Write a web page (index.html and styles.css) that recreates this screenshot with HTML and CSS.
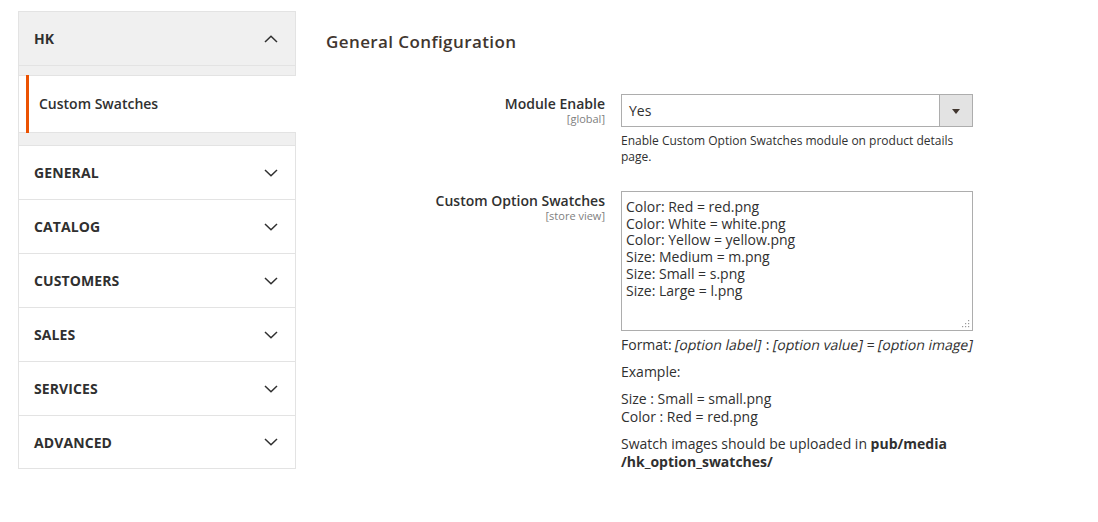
FILE: index.html
```html
<!DOCTYPE html>
<html>
<head>
<meta charset="utf-8">
<title>Configuration</title>
<link rel="stylesheet" href="styles.css">
</head>
<body>
<div class="page">
  <nav class="nav">
    <div class="nav-group">
      <div class="nav-title nav-title-open">
        <span>HK</span>
        <svg class="chev" width="14" height="8" viewBox="0 0 14 8"><polyline points="1,7 7,1.2 13,7" fill="none" stroke="#303030" stroke-width="1.5"/></svg>
      </div>
      <div class="nav-items">
        <div class="nav-item">
          <div class="nav-link">Custom Swatches</div>
        </div>
      </div>
    </div>
    <div class="nav-title"><span>GENERAL</span><svg class="chev" width="14" height="8" viewBox="0 0 14 8"><polyline points="1,1 7,6.8 13,1" fill="none" stroke="#303030" stroke-width="1.5"/></svg></div>
    <div class="nav-title"><span>CATALOG</span><svg class="chev" width="14" height="8" viewBox="0 0 14 8"><polyline points="1,1 7,6.8 13,1" fill="none" stroke="#303030" stroke-width="1.5"/></svg></div>
    <div class="nav-title"><span>CUSTOMERS</span><svg class="chev" width="14" height="8" viewBox="0 0 14 8"><polyline points="1,1 7,6.8 13,1" fill="none" stroke="#303030" stroke-width="1.5"/></svg></div>
    <div class="nav-title"><span>SALES</span><svg class="chev" width="14" height="8" viewBox="0 0 14 8"><polyline points="1,1 7,6.8 13,1" fill="none" stroke="#303030" stroke-width="1.5"/></svg></div>
    <div class="nav-title"><span>SERVICES</span><svg class="chev" width="14" height="8" viewBox="0 0 14 8"><polyline points="1,1 7,6.8 13,1" fill="none" stroke="#303030" stroke-width="1.5"/></svg></div>
    <div class="nav-title nav-last"><span>ADVANCED</span><svg class="chev" width="14" height="8" viewBox="0 0 14 8"><polyline points="1,1 7,6.8 13,1" fill="none" stroke="#303030" stroke-width="1.5"/></svg></div>
  </nav>

  <main class="main">
    <h2 class="section-title">General Configuration</h2>

    <div class="row row-first">
      <div class="label">
        <div class="label-text">Module Enable</div>
        <div class="scope">[global]</div>
      </div>
      <div class="field">
        <div class="select">
          <span class="select-value">Yes</span>
          <span class="select-arrow"><span class="tri"></span></span>
        </div>
        <div class="comment">Enable Custom Option Swatches module on product details page.</div>
      </div>
    </div>

    <div class="row">
      <div class="label">
        <div class="label-text">Custom Option Swatches</div>
        <div class="scope">[store view]</div>
      </div>
      <div class="field">
        <div class="textarea-wrap">
          <textarea class="textarea" spellcheck="false">Color: Red = red.png
Color: White = white.png
Color: Yellow = yellow.png
Size: Medium = m.png
Size: Small = s.png
Size: Large = l.png</textarea>
          <svg class="grip" width="8" height="8" viewBox="0 0 8 8">
            <rect x="6" y="0" width="1.2" height="1.2" fill="#999"/>
            <rect x="3" y="3" width="1.2" height="1.2" fill="#999"/>
            <rect x="6" y="3" width="1.2" height="1.2" fill="#999"/>
            <rect x="0" y="6" width="1.2" height="1.2" fill="#999"/>
            <rect x="3" y="6" width="1.2" height="1.2" fill="#999"/>
            <rect x="6" y="6" width="1.2" height="1.2" fill="#999"/>
          </svg>
        </div>
        <div class="note">
          <p class="nowrap">Format: <span class="obl">[option label]</span> : <span class="obl">[option value]</span> = <span class="obl">[option image]</span></p>
          <p>Example:</p>
          <p>Size : Small = small.png<br>Color : Red = red.png</p>
          <p>Swatch images should be uploaded in <strong>pub/media<wbr>/hk_option_swatches/</strong></p>
        </div>
      </div>
    </div>
  </main>
</div>
</body>
</html>
```

FILE: styles.css
```css
* { box-sizing: border-box; }

html, body {
  margin: 0;
  padding: 0;
  background: #ffffff;
}

body {
  font-family: "Open Sans", "Liberation Sans", sans-serif;
  color: #303030;
  font-size: 14px;
}

.page {
  display: flex;
  align-items: flex-start;
  gap: 30px;
  padding: 11px 0 0 18px;
}

/* Sidebar navigation */
.nav {
  width: 278px;
  flex: none;
  border: 1px solid #e3e3e3;
  background: #ffffff;
}

.nav-title {
  height: 54px;
  display: flex;
  align-items: center;
  justify-content: space-between;
  padding: 0 18px 0 15px;
  border-bottom: 1px solid #e3e3e3;
  font-weight: 700;
  font-size: 14px;
  color: #303030;
  letter-spacing: 0.1px;
}

.nav-title-open {
  background: #f0f0f0;
}

.nav-last {
  border-bottom: none;
  height: 52px;
}

.chev {
  display: block;
  margin-right: -1px;
}

.nav-items {
  background: #f0f0f0;
  padding: 9px 0 12px;
  border-bottom: 1px solid #e3e3e3;
}

.nav-item {
  background: #ffffff;
  border-top: 1px solid #e3e3e3;
  border-bottom: 1px solid #e3e3e3;
  margin-right: -1px;
  padding-left: 7px;
}

.nav-item .nav-link {
  border-left: 3px solid #eb5202;
  margin: -1px 0;
  height: 58px;
  display: flex;
  align-items: center;
  padding-left: 10px;
  padding-bottom: 2px;
  font-weight: 600;
  font-size: 14px;
  color: #303030;
}

/* Main */
.main {
  width: 660px;
}

.section-title {
  margin: 19px 0 0 0;
  font-size: 17px;
  line-height: 24px;
  font-weight: 600;
  color: #41362f;
  letter-spacing: 0.4px;
}

.row {
  display: grid;
  grid-template-columns: 279px 352px;
  column-gap: 16px;
  margin-top: 26px;
}

.row-first {
  margin-top: 40px;
}

.label {
  text-align: right;
}

.label-text {
  font-weight: 600;
  font-size: 14px;
  line-height: 16px;
  padding-top: 2px;
  color: #303030;
}

.scope {
  font-size: 11px;
  line-height: 14px;
  color: #808080;
}

.select {
  height: 33px;
  border: 1px solid #adadad;
  display: flex;
  align-items: stretch;
  background: #ffffff;
}

.select-value {
  flex: 1;
  display: flex;
  align-items: center;
  padding-left: 7px;
  font-size: 14px;
  color: #303030;
}

.select-arrow {
  width: 33px;
  background: #e3e3e3;
  border-left: 1px solid #adadad;
  display: flex;
  align-items: center;
  justify-content: center;
}

.tri {
  width: 0;
  height: 0;
  border-left: 4px solid transparent;
  border-right: 4px solid transparent;
  border-top: 5px solid #41362f;
  margin-top: 1px;
}

.comment {
  margin-top: 6px;
  font-size: 12px;
  line-height: 16px;
  color: #303030;
}

.textarea-wrap {
  position: relative;
  height: 140px;
}

.textarea {
  display: block;
  width: 100%;
  height: 140px;
  margin: 0;
  border: 1px solid #adadad;
  border-radius: 0;
  padding: 7px 4px 6px;
  font-family: "Open Sans", "Liberation Sans", sans-serif;
  font-size: 14px;
  line-height: 16.7px;
  color: #303030;
  resize: none;
  outline: none;
  overflow: hidden;
}

.grip {
  position: absolute;
  right: 3px;
  bottom: 3px;
}

.note {
  margin-top: 5px;
  font-size: 14px;
  line-height: 18px;
  color: #303030;
}

.note p {
  margin: 0 0 9px 0;
}

.note p.nowrap {
  white-space: nowrap;
}

.obl {
  display: inline-block;
  font-style: normal;
  transform: skewX(-12deg);
}

.note strong {
  font-weight: 700;
}
```
